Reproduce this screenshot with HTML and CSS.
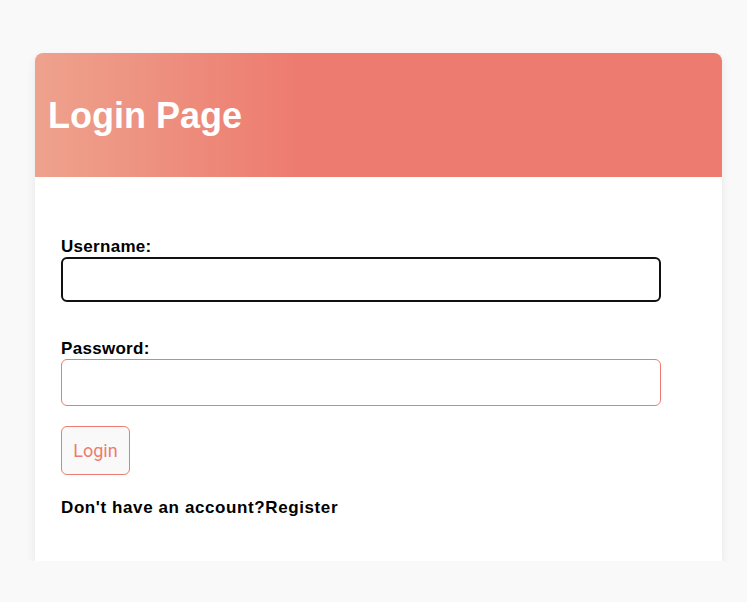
FILE: index.html
```html
<!DOCTYPE html>
<html>
<head>
<meta charset="utf-8">
<title>Login Page</title>
<link rel="stylesheet" href="styles.css">
</head>
<body>
<div class="card">
  <div class="card-header">
    <h1 class="title">Login Page</h1>
  </div>
  <form class="card-body">
    <div class="field field-first">
      <label class="label" for="username">Username:</label>
      <input class="input input-focus" id="username" type="text">
    </div>
    <div class="field">
      <label class="label" for="password">Password:</label>
      <input class="input" id="password" type="password">
    </div>
    <button class="btn" type="button">Login</button>
    <p class="foot">Don't have an account?<a class="link" href="#">Register</a></p>
  </form>
</div>
</body>
</html>
```
FILE: styles.css
```css
html, body {
  margin: 0;
  padding: 0;
  background: #f9f9f9;
}
body {
  padding: 53px 25px 0 35px;
  font-family: "Liberation Sans", Arial, sans-serif;
}
.card {
  width: 687px;
  background: #ffffff;
  border-radius: 8px 8px 0 0;
  box-shadow: 0 4px 10px rgba(0, 0, 0, 0.08);
}
.card-header {
  height: 124px;
  display: flex;
  align-items: center;
  padding: 0 13px;
  border-radius: 8px 8px 0 0;
  background: linear-gradient(to right, #eea28d 0%, #ed7b6f 39%, #ed7b6f 100%);
}
.title {
  margin: 0;
  color: #ffffff;
  font-size: 36px;
  font-weight: bold;
  padding-top: 2px;
}
.card-body {
  display: flex;
  flex-direction: column;
  align-items: flex-start;
  padding: 60px 26px 43px;
}
.field {
  display: flex;
  flex-direction: column;
  margin-bottom: 20px;
}
.field-first {
  margin-bottom: 37px;
}
.label {
  font-size: 17px;
  font-weight: bold;
  color: #000;
  line-height: 20px;
  letter-spacing: 0.3px;
}
.input {
  box-sizing: border-box;
  width: 600px;
  height: 47px;
  margin: 0;
  border: 1px solid #ed7b6f;
  border-radius: 6px;
  background: #fff;
  outline: none;
}
.input-focus {
  height: 45px;
  border: 2px solid #111;
}
.btn {
  box-sizing: border-box;
  width: 69px;
  height: 49px;
  padding: 0;
  border: 1px solid #ed7b6f;
  border-radius: 6px;
  background: #f9f9f9;
  color: #ed7b6f;
  font-family: Roboto, "Liberation Sans", sans-serif;
  font-size: 18px;
}
.foot {
  margin: 23px 0 0;
  font-size: 17px;
  font-weight: bold;
  line-height: 20px;
  letter-spacing: 0.6px;
  color: #000;
}
.link {
  color: #000;
  text-decoration: none;
}
```
